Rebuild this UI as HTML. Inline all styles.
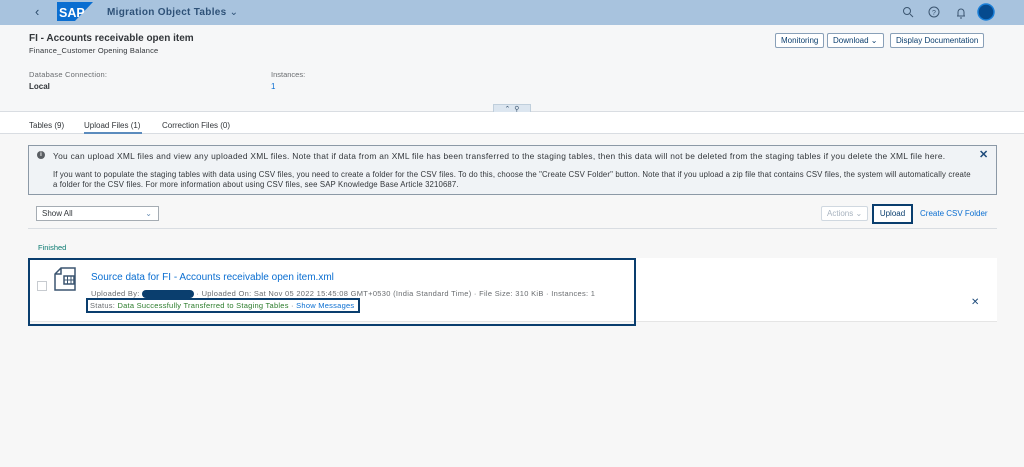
<!DOCTYPE html><html><head><meta charset="utf-8"><style>
*{box-sizing:border-box;margin:0;padding:0}
body{width:1024px;height:467px;background:#f7f7f7;font-family:"Liberation Sans",sans-serif;font-size:8px;color:#32363a;position:relative;overflow:hidden}
.a{position:absolute}
.btn{position:absolute;border:1px solid #89a0b8;background:#fff;color:#0a3e6e;font-size:8px;height:15px;line-height:13px;padding:0 5px;border-radius:2px}
</style></head><body>
<div class="a" style="left:0;top:0;width:1024px;height:25px;background:#a8c3de"></div>
<div class="a" style="left:35px;top:4px;font-size:13px;color:#2a4a6a">&#8249;</div>
<svg class="a" style="left:57px;top:2px" width="36" height="19"><polygon points="0,0 36,0 18,19 0,19" fill="#0a6ed1"/><text x="2" y="15" font-family="Liberation Sans" font-weight="bold" font-size="12.5" fill="#fff">SAP</text></svg>
<div class="a" style="left:107px;top:7px;font-size:10px;color:#2e5177;font-weight:bold;letter-spacing:.3px">Migration Object Tables <span style="font-weight:normal">&#8964;</span></div>
<svg class="a" style="left:900px;top:3px" width="100" height="20" fill="none" stroke="#3b5570" stroke-width="1"><circle cx="7" cy="8" r="3.5"/><line x1="10" y1="11" x2="13" y2="14"/><circle cx="34" cy="9" r="5"/><text x="32" y="12" font-size="7" fill="#3b5570" stroke="none">?</text><path d="M57 13 h8 M58 13 v-4 a3 3 0 0 1 6 0 v4 M60 15 h2"/><circle cx="86" cy="9" r="8" fill="#054a8e" stroke="#1a7fd8" stroke-width="1.5"/></svg>
<div class="a" style="left:0;top:25px;width:1024px;height:88px;background:#f6f7f8"></div>
<div class="a" style="left:29px;top:33px;font-size:10px;font-weight:bold;color:#32363a">FI - Accounts receivable open item</div>
<div class="a" style="left:29px;top:46px;font-size:7.5px;letter-spacing:.2px">Finance_Customer Opening Balance</div>
<div class="a" style="left:29px;top:70px;font-size:7.5px;color:#6a6d70;letter-spacing:.2px">Database Connection:</div>
<div class="a" style="left:29px;top:82px;font-size:8px;font-weight:bold;color:#32363a">Local</div>
<div class="a" style="left:271px;top:70px;font-size:7.5px;color:#6a6d70">Instances:</div>
<div class="a" style="left:271px;top:82px;font-size:8px;color:#0a6ed1">1</div>
<div class="btn" style="left:775px;top:33px">Monitoring</div>
<div class="btn" style="left:827px;top:33px">Download &#8964;</div>
<div class="btn" style="left:890px;top:33px">Display Documentation</div>
<div class="a" style="left:0;top:111px;width:1024px;height:1px;background:#d9dde2"></div>
<div class="a" style="left:493px;top:104px;width:38px;height:11px;background:#dce6f0;border:1px solid #c0cfdc;font-size:7px;color:#3b5570;text-align:center;line-height:9px">&#8963; &nbsp;&#9906;</div>
<div class="a" style="left:0;top:112px;width:1024px;height:22px;background:#fff;border-bottom:1px solid #d9dde2"></div>
<div class="a" style="left:29px;top:121px;font-size:8px">Tables (9)</div>
<div class="a" style="left:84px;top:121px;font-size:8px;color:#32363a">Upload Files (1)</div>
<div class="a" style="left:84px;top:132px;width:58px;height:2px;background:#5b8bbd"></div>
<div class="a" style="left:162px;top:121px;font-size:8px">Correction Files (0)</div>
<div class="a" style="left:28px;top:145px;width:969px;height:50px;background:#f0f3f6;border:1px solid #8c99a6"></div>
<div class="a" style="left:37px;top:151px;width:8px;height:8px;border-radius:50%;background:#5a5e63;color:#fff;font-size:6px;text-align:center;line-height:8px;font-weight:bold">i</div>
<div class="a" style="left:53px;top:151px;font-size:8.4px;letter-spacing:.28px;color:#32363a;white-space:nowrap">You can upload XML files and view any uploaded XML files. Note that if data from an XML file has been transferred to the staging tables, then this data will not be deleted from the staging tables if you delete the XML file here.</div>
<div class="a" style="left:53px;top:170px;font-size:7.8px;letter-spacing:.13px;color:#32363a;white-space:nowrap;line-height:9.5px">If you want to populate the staging tables with data using CSV files, you need to create a folder for the CSV files. To do this, choose the "Create CSV Folder" button. Note that if you upload a zip file that contains CSV files, the system will automatically create<br>a folder for the CSV files. For more information about using CSV files, see SAP Knowledge Base Article 3210687.</div>
<div class="a" style="left:979px;top:148px;font-size:11px;font-weight:bold;color:#1d4a7a">&#10005;</div>
<div class="a" style="left:36px;top:206px;width:123px;height:15px;background:#fff;border:1px solid #a5acb3;font-size:8px;line-height:13px;padding-left:5px">Show All<span style="position:absolute;right:6px;color:#6a8fb5">&#8964;</span></div>
<div class="btn" style="left:821px;top:206px;border-color:#d0d8e0;color:#a8b3bf">Actions &#8964;</div>
<div class="a" style="left:872px;top:204px;width:41px;height:20px;border:2px solid #0a3e6e;background:#fff;font-size:8px;line-height:16px;text-align:center;color:#0a3e6e">Upload</div>
<div class="a" style="left:920px;top:209px;font-size:8px;color:#0a6ed1">Create CSV Folder</div>
<div class="a" style="left:28px;top:228px;width:969px;height:1px;background:#d9dde2"></div>
<div class="a" style="left:38px;top:243px;font-size:7.5px;color:#0a7a70">Finished</div>
<div class="a" style="left:28px;top:258px;width:969px;height:64px;background:#fff;border-bottom:1px solid #e5e5e5"></div>
<div class="a" style="left:28px;top:258px;width:608px;height:68px;border:2px solid #0a3e6e"></div>
<div class="a" style="left:37px;top:281px;width:10px;height:10px;border:1px solid #c7cbd0;background:#fff"></div>
<svg class="a" style="left:53px;top:266px" width="28" height="28" fill="none" stroke="#3b5570" stroke-width="1.5"><path d="M8 2 h14 v22 h-20 v-16 z M2 8 h6 v-6"/><rect x="11" y="10" width="10" height="8" fill="#fff"/><path d="M11 14 h10 M14.5 10 v8 M18 10 v8" stroke-width="1"/></svg>
<div class="a" style="left:91px;top:272px;font-size:10px;color:#0a6ed1">Source data for FI - Accounts receivable open item.xml</div>
<div class="a" style="left:91px;top:289px;font-size:7.5px;letter-spacing:.3px;color:#6a6d70;white-space:nowrap">Uploaded By: <span style="display:inline-block;width:52px;height:8px;background:#0a3e6e;border-radius:4px;vertical-align:middle"></span> · Uploaded On: Sat Nov 05 2022 15:45:08 GMT+0530 (India Standard Time) · File Size: 310 KiB · Instances: 1</div>
<div class="a" style="left:86px;top:298px;width:274px;height:15px;border:2px solid #0a3e6e"></div>
<div class="a" style="left:90px;top:301px;font-size:7.5px;letter-spacing:.25px;color:#6a6d70;white-space:nowrap">Status: <span style="color:#2b7c2b">Data Successfully Transferred to Staging Tables</span> · <span style="color:#0a6ed1">Show Messages</span></div>
<div class="a" style="left:971px;top:297px;font-size:10px;color:#1d4a7a">&#10005;</div>
</body></html>
